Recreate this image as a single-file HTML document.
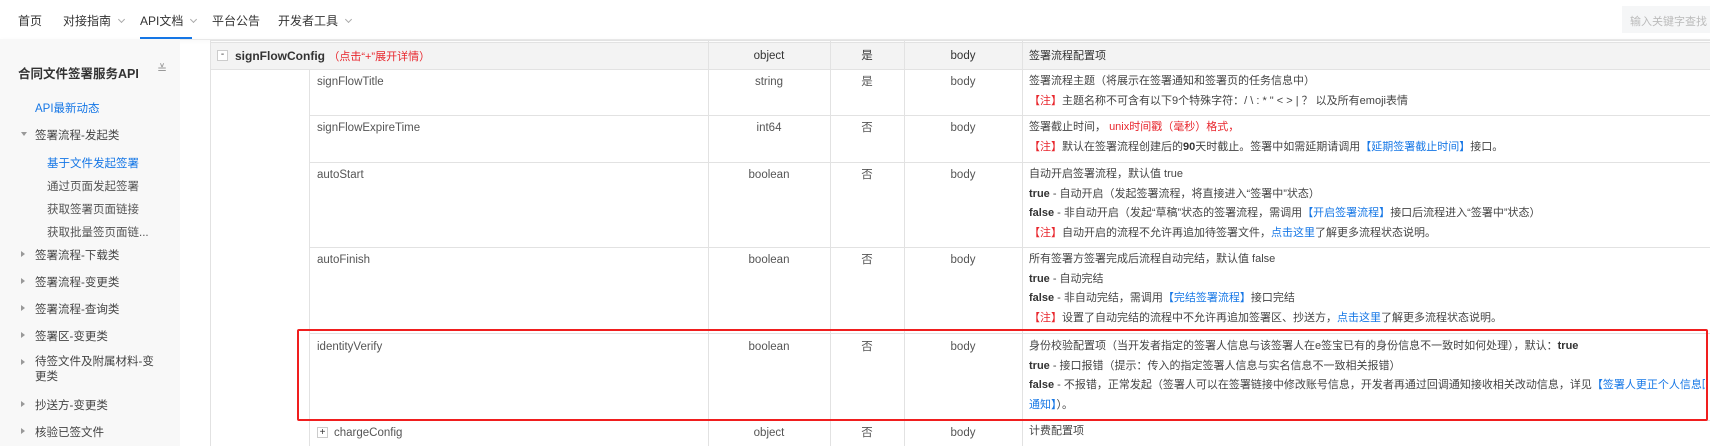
<!DOCTYPE html>
<html><head><meta charset="utf-8"><style>
*{margin:0;padding:0;box-sizing:border-box}
body{width:1710px;height:446px;overflow:hidden;background:#fff;font-family:"Liberation Sans","Noto Sans CJK SC",sans-serif;color:#333;position:relative}
.a{position:absolute;white-space:nowrap}
.nav{font-size:12px;color:#333;top:12px}
.chev{display:inline-block;width:5px;height:5px;border-right:1px solid #aaa;border-bottom:1px solid #aaa;transform:rotate(45deg);margin-left:8px;position:relative;top:-3px}
.side{position:absolute;left:0;top:39px;width:180px;height:407px;background:#f8f8f8}
.si{position:absolute;font-size:11.5px;color:#444;white-space:nowrap}
.tri{position:absolute;left:21px;width:0;height:0;border-top:3px solid transparent;border-bottom:3px solid transparent;border-left:4px solid #999}
.hl{position:absolute;height:1px;background:#e2e2e2}
.vl{position:absolute;width:1px;background:#e2e2e2}
.t{position:absolute;font-size:11.5px;color:#555;white-space:nowrap;line-height:14px}
.c{text-align:center}
.d{position:absolute;left:1029px;font-size:11px;color:#444;white-space:nowrap;line-height:19.5px;width:676px;overflow:hidden}
.r{color:#e8262d}.b{color:#1677e6}
.d b{color:#333}
</style></head><body>
<div class="a nav" style="left:18px">首页</div>
<div class="a nav" style="left:63px">对接指南<span class="chev"></span></div>
<div class="a nav" style="left:140px">API文档<span class="chev"></span></div>
<div class="a nav" style="left:212px">平台公告</div>
<div class="a nav" style="left:278px">开发者工具<span class="chev"></span></div>
<div class="a" style="left:140px;top:37px;width:52px;height:2px;background:#1677e6"></div>
<div class="a" style="left:1622px;top:6px;width:88px;height:27px;background:#f5f6f7;font-size:11px;color:#bbb;padding:7px 0 0 8px">输入关键字查找</div>
<div class="a" style="left:0;top:39px;width:1710px;height:1px;background:#e8e8e8;box-shadow:0 1px 3px rgba(0,0,0,.08)"></div>

<div class="side"></div>
<div class="si" style="left:18px;top:63px;font-size:12.5px;font-weight:bold;color:#333">合同文件签署服务API</div>
<div class="si" style="left:157px;top:62px;color:#999;font-size:12px">≚</div>
<div class="si" style="left:35px;top:100px;color:#1677e6">API最新动态</div>
<div class="tri" style="top:132px;border-left:3px solid transparent;border-right:3px solid transparent;border-top:4px solid #999;border-bottom:0"></div>
<div class="si" style="left:35px;top:127px">签署流程-发起类</div>
<div class="si" style="left:47px;top:155px;color:#1677e6">基于文件发起签署</div>
<div class="si" style="left:47px;top:178px;color:#555">通过页面发起签署</div>
<div class="si" style="left:47px;top:201px;color:#555">获取签署页面链接</div>
<div class="si" style="left:47px;top:224px;color:#555">获取批量签页面链...</div>
<div class="tri" style="top:251px"></div><div class="si" style="left:35px;top:247px">签署流程-下载类</div>
<div class="tri" style="top:278px"></div><div class="si" style="left:35px;top:274px">签署流程-变更类</div>
<div class="tri" style="top:305px"></div><div class="si" style="left:35px;top:301px">签署流程-查询类</div>
<div class="tri" style="top:332px"></div><div class="si" style="left:35px;top:328px">签署区-变更类</div>
<div class="tri" style="top:359px"></div><div class="si" style="left:35px;top:355px;line-height:15px">待签文件及附属材料-变<br>更类</div>
<div class="tri" style="top:401px"></div><div class="si" style="left:35px;top:397px">抄送方-变更类</div>
<div class="tri" style="top:428px"></div><div class="si" style="left:35px;top:424px">核验已签文件</div>

<div class="a" style="left:210px;top:42px;width:1500px;height:27px;background:#f3f3f3"></div>
<div class="hl" style="left:210px;top:40px;width:1500px"></div>
<div class="hl" style="left:210px;top:42px;width:1500px"></div>
<div class="hl" style="left:210px;top:69px;width:1500px"></div>
<div class="hl" style="left:309px;top:115px;width:1401px"></div>
<div class="hl" style="left:309px;top:162px;width:1401px"></div>
<div class="hl" style="left:309px;top:247px;width:1401px"></div>
<div class="hl" style="left:309px;top:333px;width:1401px"></div>
<div class="hl" style="left:309px;top:420px;width:1401px"></div>
<div class="vl" style="left:210px;top:40px;height:406px"></div>
<div class="vl" style="left:309px;top:69px;height:377px"></div>
<div class="vl" style="left:708px;top:40px;height:406px"></div>
<div class="vl" style="left:830px;top:40px;height:406px"></div>
<div class="vl" style="left:904px;top:40px;height:406px"></div>
<div class="vl" style="left:1022px;top:40px;height:406px"></div>

<div class="a" style="left:217px;top:50px;width:11px;height:11px;border:1px solid #ccc;background:#fff;font-size:10px;line-height:8px;text-align:center;color:#333">-</div>
<div class="t" style="left:235px;top:49px;font-weight:bold;color:#333;font-size:12px">signFlowConfig <span style="font-weight:normal;color:#e8262d;font-size:11px">（点击“+”展开详情）</span></div>
<div class="t" style="left:708px;width:122px;top:49px;text-align:center;color:#333">object</div>
<div class="t" style="left:830px;width:74px;top:49px;text-align:center;color:#333">是</div>
<div class="t" style="left:904px;width:118px;top:49px;text-align:center;color:#333">body</div>
<div class="t" style="left:1029px;top:49px;color:#333;font-size:11px">签署流程配置项</div>

<div class="t" style="left:317px;top:75px">signFlowTitle</div>
<div class="t c" style="left:708px;width:122px;top:75px">string</div>
<div class="t c" style="left:830px;width:74px;top:75px">是</div>
<div class="t c" style="left:904px;width:118px;top:75px">body</div>
<div class="d" style="top:72px">签署流程主题（将展示在签署通知和签署页的任务信息中）<br><span class="r">【注】</span>主题名称不可含有以下9个特殊字符：/ \ : * " &lt; &gt; | ？ 以及所有emoji表情</div>

<div class="t" style="left:317px;top:121px">signFlowExpireTime</div>
<div class="t c" style="left:708px;width:122px;top:121px">int64</div>
<div class="t c" style="left:830px;width:74px;top:121px">否</div>
<div class="t c" style="left:904px;width:118px;top:121px">body</div>
<div class="d" style="top:118px">签署截止时间， <span class="r">unix时间戳（毫秒）格式，</span><br><span class="r">【注】</span>默认在签署流程创建后的<b>90</b>天时截止。签署中如需延期请调用<span class="b">【延期签署截止时间】</span>接口。</div>

<div class="t" style="left:317px;top:168px">autoStart</div>
<div class="t c" style="left:708px;width:122px;top:168px">boolean</div>
<div class="t c" style="left:830px;width:74px;top:168px">否</div>
<div class="t c" style="left:904px;width:118px;top:168px">body</div>
<div class="d" style="top:165px">自动开启签署流程，默认值 true<br><b>true</b> - 自动开启（发起签署流程，将直接进入“签署中”状态）<br><b>false</b> - 非自动开启（发起“草稿”状态的签署流程，需调用<span class="b">【开启签署流程】</span>接口后流程进入“签署中”状态）<br><span class="r">【注】</span>自动开启的流程不允许再追加待签署文件，<span class="b">点击这里</span>了解更多流程状态说明。</div>

<div class="t" style="left:317px;top:253px">autoFinish</div>
<div class="t c" style="left:708px;width:122px;top:253px">boolean</div>
<div class="t c" style="left:830px;width:74px;top:253px">否</div>
<div class="t c" style="left:904px;width:118px;top:253px">body</div>
<div class="d" style="top:250px">所有签署方签署完成后流程自动完结，默认值 false<br><b>true</b> - 自动完结<br><b>false</b> - 非自动完结，需调用<span class="b">【完结签署流程】</span>接口完结<br><span class="r">【注】</span>设置了自动完结的流程中不允许再追加签署区、抄送方，<span class="b">点击这里</span>了解更多流程状态说明。</div>

<div class="t" style="left:317px;top:340px">identityVerify</div>
<div class="t c" style="left:708px;width:122px;top:340px">boolean</div>
<div class="t c" style="left:830px;width:74px;top:340px">否</div>
<div class="t c" style="left:904px;width:118px;top:340px">body</div>
<div class="d" style="top:337px">身份校验配置项（当开发者指定的签署人信息与该签署人在e签宝已有的身份信息不一致时如何处理），默认：<b>true</b><br><b>true</b> - 接口报错（提示：传入的指定签署人信息与实名信息不一致相关报错）<br><b>false</b> - 不报错，正常发起（签署人可以在签署链接中修改账号信息，开发者再通过回调通知接收相关改动信息，详见<span class="b">【签署人更正个人信息回调</span><br><span class="b">通知】</span>）。</div>

<div class="a" style="left:317px;top:427px;width:11px;height:11px;border:1px solid #ccc;background:#fff;font-size:10px;line-height:9px;text-align:center;color:#333">+</div>
<div class="t" style="left:334px;top:426px">chargeConfig</div>
<div class="t c" style="left:708px;width:122px;top:426px">object</div>
<div class="t c" style="left:830px;width:74px;top:426px">否</div>
<div class="t c" style="left:904px;width:118px;top:426px">body</div>
<div class="d" style="top:422px">计费配置项</div>

<div class="a" style="left:297px;top:329px;width:1411px;height:92px;border:2px solid #f01e1e;border-radius:2px"></div>
</body></html>
